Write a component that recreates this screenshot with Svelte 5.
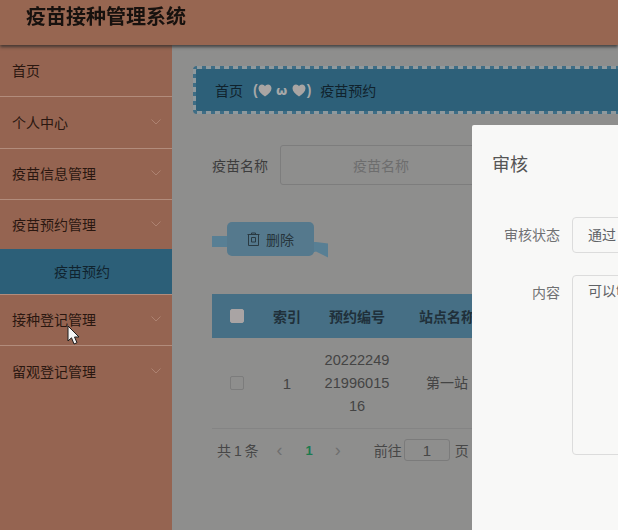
<script>
  const menu = [
    { label: '首页', arrow: false, h: 52, line: true },
    { label: '个人中心', arrow: true, h: 52, line: true },
    { label: '疫苗信息管理', arrow: true, h: 51, line: true },
    { label: '疫苗预约管理', arrow: true, h: 49, line: false, sub: '疫苗预约' },
    { label: '接种登记管理', arrow: true, h: 51, line: true },
    { label: '留观登记管理', arrow: true, h: 51, line: false }
  ];
</script>

{#snippet heart()}
  <svg class="heart" width="14" height="13" viewBox="0 0 14 13"><path d="M7 12.500C3 9.500.5 7.200.5 4.200.5 2 2.200.5 4 .5 5.300.5 6.400 1.200 7 2.300 7.600 1.200 8.700.5 10 .5c1.800 0 3.500 1.500 3.500 3.700 0 3-2.500 5.300-6.500 8.300z" fill="#a9a5a3"/></svg>
{/snippet}

<div class="page">
  <header class="top"><h1>疫苗接种管理系统</h1></header>
  <div class="body">
    <aside class="side">
      {#each menu as m}
        <div class="item" class:line={m.line} style:height="{m.h}px">
          <span>{m.label}</span>
          {#if m.arrow}
            <svg class="chev" width="10" height="6" viewBox="0 0 10 6"><path d="M.5.5 5 5 9.500.5" fill="none" stroke="#ad8271" stroke-width="1"/></svg>
          {/if}
        </div>
        {#if m.sub}<div class="sub">{m.sub}</div>{/if}
      {/each}
    </aside>
    <main class="main">
      <div class="crumb">
        <span>首页</span>
        <span class="sep">
          <span>(</span>{@render heart()}<i>ω</i>{@render heart()}<span class="close">)</span>
        </span>
        <span>疫苗预约</span>
      </div>
      <div class="search">
        <label for="q">疫苗名称</label>
        <div id="q" class="input">疫苗名称</div>
      </div>
      <div class="actions">
        <span class="flag-l"></span>
        <button class="del">
          <svg width="13" height="14" viewBox="0 0 13 14" fill="none" stroke="#2a3a42" stroke-width="1"><path d="M.5 2.500h12M4.500 2.500V1h4v1.500M1.500 2.500v11h10v-11M4.500 5.500h4v4.500h-4z"/></svg>
          删除
        </button>
        <span class="flag-r"></span>
      </div>
      <div class="table">
        <div class="row head">
          <div class="c c1"><span class="check head-check"></span></div>
          <div class="c c2">索引</div>
          <div class="c c3">预约编号</div>
          <div class="c c4">站点名称</div>
        </div>
        <div class="row data">
          <div class="c c1"><span class="check"></span></div>
          <div class="c c2 num">1</div>
          <div class="c c3 num">20222249<br>21996015<br>16</div>
          <div class="c c4">第一站</div>
        </div>
      </div>
      <div class="pager">
        <span class="total">共 1 条</span>
        <span class="arrow">‹</span>
        <span class="cur">1</span>
        <span class="arrow next">›</span>
        <span class="goto">前往</span>
        <span class="pinput">1</span>
        <span>页</span>
      </div>
    </main>
  </div>
  <section class="modal">
    <h2>审核</h2>
    <div class="field first">
      <span class="lab">审核状态</span>
      <div class="box select">通过</div>
    </div>
    <div class="field">
      <span class="lab">内容</span>
      <div class="box area">可以够</div>
    </div>
  </section>
  <svg class="cursor" width="13" height="21" viewBox="0 0 13 21"><path d="M1 1v15l3.500-3.200L7 19l3-1.300-2.500-5.700H12z" fill="#f5f5f5" stroke="#1c1c1c" stroke-width="1"/></svg>
</div>

<style>
  :global(body) { margin: 0; overflow: hidden; background: #8e8e8d; }
  .page {
    position: relative;
    width: 618px;
    height: 530px;
    overflow: hidden;
    font-family: "Liberation Sans", "Noto Sans CJK SC", sans-serif;
    font-size: 14px;
    color: #2b1a12;
    filter: blur(0.35px);
  }
  .top {
    height: 45px;
    background: #976651;
    box-shadow: 0 2px 3px rgba(40, 40, 40, 0.75);
    position: relative;
    z-index: 1;
    display: flex;
    align-items: center;
    padding-left: 26px;
    box-sizing: border-box;
  }
  h1 {
    margin: 0 0 11px;
    font-size: 20px;
    line-height: 24px;
    font-weight: 700;
    color: #17110e;
  }
  .body { display: flex; height: 485px; }
  .side { width: 172px; background: #956451; flex: none; }
  .item {
    box-sizing: border-box;
    display: flex;
    align-items: center;
    justify-content: space-between;
    padding: 0 11px 2px 12px;
    color: #2a1710;
  }
  .item.line { border-bottom: 1px solid #b28c7c; }
  .sub {
    height: 43px;
    background: #2c5f78;
    color: #10232e;
    display: flex;
    align-items: center;
    padding: 0 0 2px 54px;
    border-bottom: 1px solid #b28c7c;
    box-sizing: content-box;
  }
  .main { flex: 1; min-width: 0; padding: 21px 0 0 22px; background: #8e8e8d; color: #3c3c3c; }
  .crumb {
    margin-left: -1px;
    width: 460px;
    height: 48px;
    box-sizing: border-box;
    border: 3px solid transparent;
    border-radius: 4px;
    background:
      linear-gradient(#2d6079, #2d6079) padding-box,
      repeating-linear-gradient(90deg, #3e6d85 0 4px, #8f999d 4px 9px) top / 100% 3px no-repeat border-box,
      repeating-linear-gradient(90deg, #3e6d85 0 4px, #8f999d 4px 9px) bottom / 100% 3px no-repeat border-box,
      repeating-linear-gradient(0deg, #3e6d85 0 4px, #8f999d 4px 9px) left / 3px 100% no-repeat border-box;
    display: flex;
    align-items: center;
    gap: 9px;
    padding-left: 19px;
    color: #10222c;
    white-space: nowrap;
  }
  .sep { color: #a6a8a8; font-weight: 700; display: flex; align-items: center; margin-left: 1px; }
  .sep i { font-style: normal; font-size: 13px; font-family: "DejaVu Sans", sans-serif; width: 12px; margin: 0 4px; text-align: center; }
  .close { margin-left: 1px; }
  .search { display: flex; align-items: center; gap: 12px; margin: 31px 0 0 18px; color: #3d3d3d; }
  .input {
    width: 202px;
    height: 40px;
    flex: none;
    box-sizing: border-box;
    border: 1px solid #7d7d7d;
    border-radius: 3px;
    display: flex;
    align-items: center;
    justify-content: center;
    color: #6d6d6d;
    background: #8e8e8d;
  }
  .actions { display: flex; align-items: center; margin: 36px 0 0 18px; height: 35px; }
  .flag-l { width: 15px; height: 11px; background: #587f94; margin-top: 5px; }
  .del {
    width: 87px;
    height: 34px;
    border: 0;
    border-radius: 5px;
    background: #55798d;
    color: #26343b;
    font: inherit;
    display: flex;
    align-items: center;
    justify-content: center;
    gap: 6px;
    padding: 0;
    position: relative;
    z-index: 1;
  }
  .flag-r {
    width: 16px;
    height: 16px;
    margin-left: -2px;
    background: #587f94;
    margin-top: 22px;
    clip-path: polygon(0 0, 100% 12%, 100% 100%, 25% 62%, 0 70%);
  }
  .table { margin: 38px 0 0 18px; width: 420px; }
  .row { display: flex; align-items: center; }
  .head { height: 44px; background: #466f85; font-weight: 700; color: #20303a; }
  .data { height: 90px; border-bottom: 1px solid #848484; color: #444; line-height: 23px; }
  .c { flex: none; text-align: center; box-sizing: border-box; }
  .c1 { width: 50px; display: flex; justify-content: center; }
  .c2 { width: 50px; }
  .c3 { width: 90px; }
  .c4 { width: 60px; white-space: nowrap; margin-left: 15px; }
  .c3.num { font-size: 14.600px; }
  .c2.num { font-size: 15px; }
  .check { width: 14px; height: 14px; border: 1px solid #7c7c7c; border-radius: 2px; display: block; background: #8e8e8d; box-sizing: border-box; }
  .head-check { background: #a9a4a4; border-color: #a9a4a4; }
  .pager { display: flex; align-items: center; margin: 8px 0 0 23px; height: 26px; color: #474747; white-space: nowrap; }
  .total { word-spacing: -1px; }
  .arrow { color: #6f6f6f; margin-left: 18px; width: 8px; font-size: 18px; }
  .cur { color: #1b7a4f; font-weight: 700; font-size: 13px; margin-left: 21px; }
  .arrow.next { margin-left: 22px; }
  .goto { margin-left: 31px; }
  .pinput {
    width: 46px;
    height: 22px;
    margin: 0 5px 0 2px;
    border: 1px solid #7b7b7b;
    border-radius: 3px;
    display: flex;
    align-items: center;
    justify-content: center;
    box-sizing: border-box;
    font-size: 15px;
  }
  .modal {
    position: absolute;
    left: 472px;
    top: 125px;
    width: 400px;
    height: 500px;
    border-radius: 2px 0 0 0;
    background: #f8f8f7;
    color: #606266;
    z-index: 2;
  }
  h2 { margin: 0; position: absolute; left: 20px; top: 28px; font-size: 18px; line-height: 24px; font-weight: 400; color: #555; }
  .field { position: absolute; left: 0; top: 150px; display: flex; }
  .field.first { top: 92px; }
  .lab { width: 88px; text-align: right; line-height: 36px; color: #707173; }
  .box {
    margin-left: 12px;
    box-sizing: border-box;
    border: 1px solid #dcdcdc;
    border-radius: 4px;
    width: 200px;
    padding-left: 15px;
    color: #606266;
  }
  .select { height: 36px; line-height: 34px; }
  .area { height: 180px; line-height: 30px; }
  .cursor { position: absolute; left: 67px; top: 325px; z-index: 3; }
  .heart { display: block; }
</style>
